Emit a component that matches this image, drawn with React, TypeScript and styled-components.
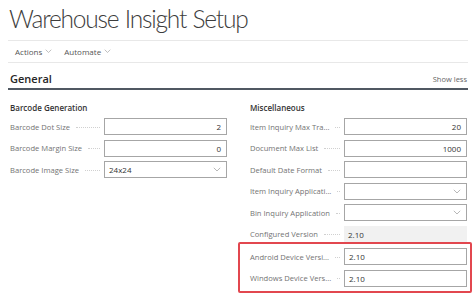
import React from "react";
import styled, { createGlobalStyle } from "styled-components";

const Global = createGlobalStyle`
  html, body { margin: 0; padding: 0; background: #fff; }
  body { font-family: "Open Sans", "Noto Sans", sans-serif; color: #333; }
  * { box-sizing: border-box; }
`;

const Page = styled.div`
  width: 474px;
  height: 293px;
  overflow: hidden;
  padding: 0 6px 0 8px;
`;

const Title = styled.h1`
  margin: 0;
  height: 40px;
  padding: 3px 0 0 1px;
  font-family: Lato, "Open Sans", sans-serif;
  font-size: 24.5px;
  line-height: 32px;
  font-weight: 300;
  color: #3d3d3d;
  letter-spacing: -1.2px;
  word-spacing: 1px;
`;

const Toolbar = styled.div`
  height: 23px;
  border-top: 1px solid #e8e8e8;
  border-bottom: 1px solid #e8e8e8;
  display: flex;
  align-items: center;
  gap: 12px;
  padding-left: 7px;
`;

const MenuButton = styled.span`
  display: inline-flex;
  align-items: center;
  gap: 3px;
  font-size: 8px;
  color: #555;
`;

const Chevron = ({ size = 7 }: { size?: number }) => (
  <svg width={size} height={size * 0.6} viewBox="0 0 10 6" fill="none">
    <path d="M1 1l4 4 4-4" stroke="#9a9a9a" strokeWidth="0.9" />
  </svg>
);

const SectionHeader = styled.div`
  height: 27px;
  display: flex;
  align-items: flex-end;
  justify-content: space-between;
  border-bottom: 2px solid #505862;
  padding: 0 1px 2px 2px;
`;

const SectionTitle = styled.span`
  font-size: 11px;
  font-weight: 600;
  color: #262626;
  line-height: 14px;
`;

const ShowLess = styled.span`
  font-size: 7.5px;
  color: #666;
  line-height: 14px;
`;

const Columns = styled.div`
  display: grid;
  grid-template-columns: 217px 217px;
  column-gap: 23px;
  padding-left: 2px;
`;

const Column = styled.div`
  display: flex;
  flex-direction: column;
`;

const GroupTitle = styled.div`
  font-size: 8px;
  font-weight: 600;
  color: #333;
  height: 28px;
  padding-top: 12px;
  line-height: 12px;
`;

const Row = styled.div`
  display: grid;
  grid-template-columns: 94px 1fr;
  height: 21.5px;
  align-items: start;
`;

const LabelCell = styled.div`
  display: flex;
  align-items: center;
  height: 17px;
  min-width: 0;
`;

const LabelText = styled.span`
  font-size: 7.6px;
  color: #737373;
  white-space: nowrap;
  flex: none;
`;

const Leader = styled.span`
  flex: 1;
  min-width: 3px;
  margin: 1px 4px 0 6px;
  border-bottom: 1px dotted #d0d0d0;
`;

const Field = styled.div<{ $align?: "left" | "right"; $readOnly?: boolean }>`
  height: 17px;
  border: ${(p) => (p.$readOnly ? "none" : "1px solid #a6a6a6")};
  background: ${(p) => (p.$readOnly ? "#f1f1f1" : "#fff")};
  display: flex;
  align-items: center;
  justify-content: ${(p) => (p.$align === "right" ? "flex-end" : "space-between")};
  padding: 0 5px 0 4px;
  font-size: 8px;
  color: #333;
`;

const Highlight = styled.div`
  margin: -5px -5px 0 -12px;
  padding: 4px 3px 0 10px;
  border: 2px solid #e2474f;
  border-radius: 2px;
`;

type RowDef = {
  label: string;
  value?: string;
  kind?: "number" | "text" | "select" | "readonly";
};

const FieldRow = ({ label, value = "", kind = "text" }: RowDef) => (
  <Row>
    <LabelCell>
      <LabelText>{label}</LabelText>
      <Leader />
    </LabelCell>
    <Field $align={kind === "number" ? "right" : "left"} $readOnly={kind === "readonly"}>
      <span>{value}</span>
      {kind === "select" && <Chevron size={8} />}
    </Field>
  </Row>
);

const leftRows: RowDef[] = [
  { label: "Barcode Dot Size", value: "2", kind: "number" },
  { label: "Barcode Margin Size", value: "0", kind: "number" },
  { label: "Barcode Image Size", value: "24x24", kind: "select" },
];

const rightRows: RowDef[] = [
  { label: "Item Inquiry Max Tra...", value: "20", kind: "number" },
  { label: "Document Max List", value: "1000", kind: "number" },
  { label: "Default Date Format", value: "", kind: "text" },
  { label: "Item Inquiry Applicati...", value: "", kind: "select" },
  { label: "Bin Inquiry Application", value: "", kind: "select" },
  { label: "Configured Version", value: "2.10", kind: "readonly" },
];

const highlighted: RowDef[] = [
  { label: "Android Device Versi...", value: "2.10", kind: "text" },
  { label: "Windows Device Vers...", value: "2.10", kind: "text" },
];

export default function App() {
  return (
    <Page>
      <Global />
      <Title>Warehouse Insight Setup</Title>
      <Toolbar>
        <MenuButton>
          Actions <Chevron />
        </MenuButton>
        <MenuButton>
          Automate <Chevron />
        </MenuButton>
      </Toolbar>
      <SectionHeader>
        <SectionTitle>General</SectionTitle>
        <ShowLess>Show less</ShowLess>
      </SectionHeader>
      <Columns>
        <Column>
          <GroupTitle>Barcode Generation</GroupTitle>
          {leftRows.map((r) => (
            <FieldRow key={r.label} {...r} />
          ))}
        </Column>
        <Column>
          <GroupTitle>Miscellaneous</GroupTitle>
          {rightRows.map((r) => (
            <FieldRow key={r.label} {...r} />
          ))}
          <Highlight>
            {highlighted.map((r) => (
              <FieldRow key={r.label} {...r} />
            ))}
          </Highlight>
        </Column>
      </Columns>
    </Page>
  );
}
